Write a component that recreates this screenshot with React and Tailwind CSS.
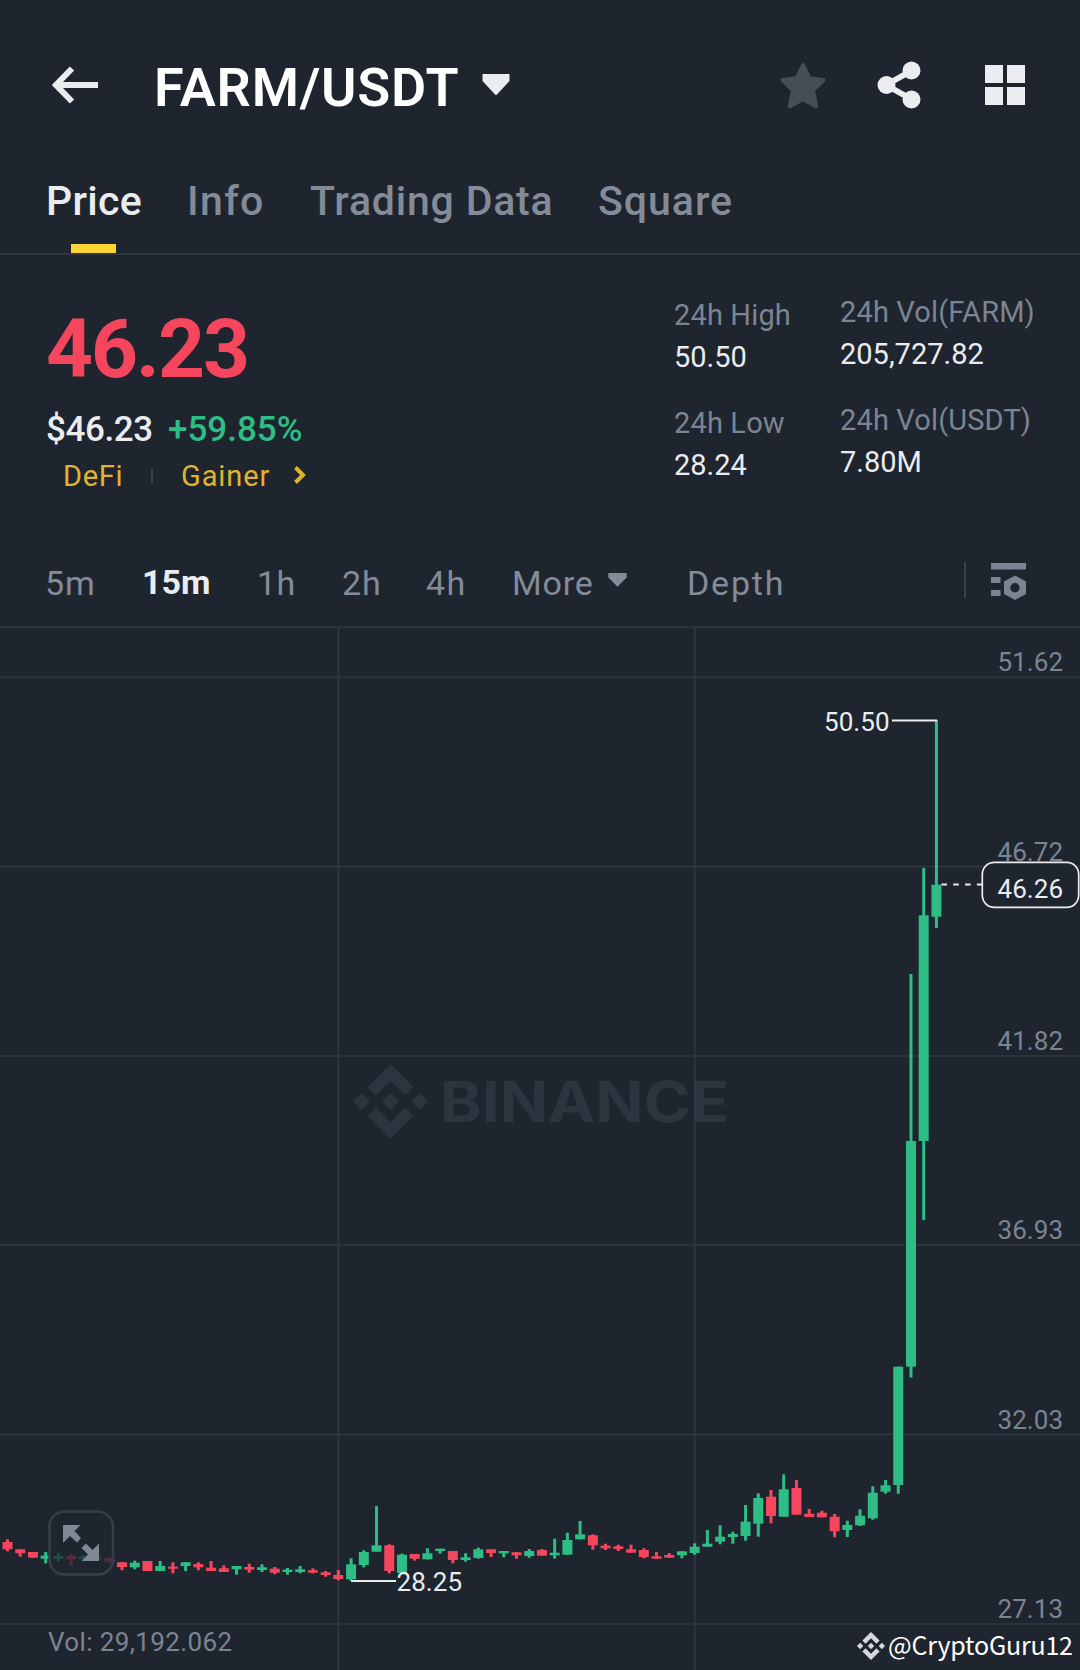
import { clsx } from 'clsx'

const UP = '#2ebd85'
const DOWN = '#f6465d'
const GRID = '#313843'

const TABS = [
  { label: 'Price', cls: 'ml-[46px] w-[141px] tracking-[0.3px]' },
  { label: 'Info', cls: 'w-[123px] tracking-[1.4px]' },
  { label: 'Trading Data', cls: 'w-[288px] tracking-[0.8px]' },
  { label: 'Square', cls: 'w-[150px] tracking-[1px]' },
]

const INTERVALS = [
  { label: '5m', cls: 'w-[97px] tracking-[1px]' },
  { label: '15m', cls: 'w-[115px]' },
  { label: '1h', cls: 'w-[85px] tracking-[0.5px]' },
  { label: '2h', cls: 'w-[84px] tracking-[0.8px]' },
  { label: '4h', cls: 'w-[86px] tracking-[1.5px]' },
]

const STATS = [
  [['24h High', '50.50'], ['24h Low', '28.24']],
  [['24h Vol(FARM)', '205,727.82'], ['24h Vol(USDT)', '7.80M']],
]

const LEVELS = [
  { y: 677.3, label: '51.62' },
  { y: 866.5, label: '46.72' },
  { y: 1056, label: '41.82' },
  { y: 1245, label: '36.93' },
  { y: 1434.5, label: '32.03' },
  { y: 1624, label: '27.13' },
]

// up?, high, body top, body bottom, low
const CANDLES = [
  [0, 1539.3, 1542, 1549.3, 1551.3],
  [0, 1549.3, 1549.3, 1553.3, 1556.7],
  [0, 1552, 1552, 1557.7, 1557.7],
  [1, 1552, 1555.7, 1558.7, 1563.3],
  [1, 1553.3, 1556, 1558.7, 1561.7],
  [0, 1554.3, 1556, 1559.3, 1566],
  [1, 1555.3, 1556.7, 1559.3, 1560],
  [1, 1556.7, 1557.3, 1559.3, 1560.7],
  [0, 1557.3, 1558.3, 1561.7, 1562.7],
  [0, 1562.3, 1562.3, 1567, 1570.3],
  [1, 1560.7, 1562.7, 1567.3, 1569.3],
  [0, 1561, 1561, 1571, 1571],
  [1, 1561, 1566, 1571, 1571],
  [0, 1562.3, 1566.7, 1568.7, 1573.3],
  [1, 1562.3, 1562.3, 1566, 1571],
  [0, 1562.3, 1564, 1567.3, 1570.3],
  [0, 1561, 1567.7, 1571, 1571],
  [0, 1565.3, 1568.3, 1572, 1572],
  [1, 1566, 1566, 1569.3, 1574.7],
  [0, 1563.7, 1567, 1569.7, 1572.7],
  [1, 1564.3, 1567.3, 1570, 1572],
  [0, 1567, 1568.7, 1572.7, 1574.3],
  [1, 1568, 1569.7, 1572, 1574.7],
  [1, 1566, 1569.3, 1572, 1573.3],
  [0, 1568.3, 1570.3, 1572.7, 1573.3],
  [0, 1571, 1572.3, 1575, 1576.7],
  [0, 1570, 1575, 1579, 1580.3],
  [1, 1558.3, 1564.3, 1579.3, 1581],
  [1, 1550.3, 1552, 1565, 1567.3],
  [1, 1506, 1545.3, 1551.7, 1551.7],
  [0, 1544.3, 1545.3, 1571, 1573.3],
  [1, 1553.7, 1554.7, 1573, 1573],
  [0, 1554, 1554, 1558.7, 1560.7],
  [1, 1548.3, 1553.3, 1559.3, 1559.3],
  [1, 1548.7, 1548.7, 1551, 1553.7],
  [0, 1551, 1551, 1560, 1563.3],
  [1, 1553.3, 1557.3, 1560, 1561.7],
  [1, 1547.7, 1549.3, 1558, 1558.7],
  [0, 1549.3, 1549.3, 1553, 1557],
  [1, 1551, 1551, 1553.3, 1557.3],
  [0, 1552.3, 1552.3, 1555.3, 1558.7],
  [1, 1549, 1551, 1556, 1557.7],
  [0, 1549, 1550, 1555.7, 1555.7],
  [1, 1538.7, 1552.7, 1555.3, 1558.7],
  [1, 1532.7, 1540, 1554.7, 1554.7],
  [1, 1521, 1534.3, 1539.3, 1539.3],
  [0, 1534.3, 1535.3, 1545.3, 1549.7],
  [0, 1543.7, 1545.7, 1548.3, 1550],
  [0, 1544.7, 1546.3, 1549, 1551],
  [0, 1544.7, 1549.3, 1552.7, 1552.7],
  [0, 1548.3, 1550, 1557, 1558.3],
  [0, 1552, 1556.3, 1558.7, 1558.7],
  [0, 1553, 1555, 1557.7, 1557.7],
  [1, 1551.3, 1551.3, 1555.3, 1558.3],
  [1, 1543.3, 1546.7, 1553, 1554.7],
  [1, 1530, 1543.7, 1546.7, 1546.7],
  [1, 1525.3, 1536.7, 1541.7, 1544.3],
  [1, 1531.7, 1534, 1537, 1543.7],
  [1, 1505, 1521.7, 1536, 1540.7],
  [1, 1493.3, 1498, 1523.7, 1536.7],
  [0, 1490, 1496.7, 1516, 1523.3],
  [1, 1474.3, 1489.3, 1516.7, 1516.7],
  [0, 1480, 1488, 1514.7, 1514.7],
  [0, 1509, 1513.7, 1517, 1517],
  [0, 1510.7, 1512.7, 1517.3, 1517.3],
  [0, 1514, 1516.7, 1531.3, 1537.3],
  [1, 1520.7, 1525, 1530, 1537],
  [1, 1509.3, 1515.7, 1525.3, 1526],
  [1, 1486.3, 1492.7, 1518.3, 1519.7],
  [1, 1480, 1485.3, 1491.7, 1493.7],
  [1, 1366.7, 1366.7, 1485, 1493.7],
  [1, 974, 1141, 1366.7, 1377.5],
  [1, 868, 915.3, 1141, 1220],
  [1, 720, 884.7, 916.7, 928],
]

const X0 = 7.5
const STEP = 12.725

function CaretDown({ className }) {
  return (
    <svg viewBox="0 0 28 22" className={className} preserveAspectRatio="none">
      <path d="M0.5 0H27.5V7L14 21.5L0.5 7Z" fill="currentColor" />
    </svg>
  )
}

function BinanceMark(props) {
  return (
    <svg viewBox="0 0 126.6 126.6" fill="currentColor" {...props}>
      <path d="M38.7 53.2L63.3 28.6L87.9 53.2L102.2 38.9L63.3 0L24.4 38.9Z" />
      <path d="M0 63.3L14.3 49L28.6 63.3L14.3 77.6Z" />
      <path d="M38.7 73.4L63.3 98L87.9 73.4L102.2 87.7L63.3 126.6L24.4 87.7Z" />
      <path d="M98 63.3L112.3 49L126.6 63.3L112.3 77.6Z" />
      <path d="M77.8 63.3L63.3 48.8L48.8 63.3L63.3 77.8Z" />
    </svg>
  )
}

function Header() {
  return (
    <header className="flex h-[170px] items-center text-[#eaecef]">
      <svg viewBox="0 0 46 38" className="ml-[52px] h-[38px] w-[46px]" fill="none" stroke="currentColor" strokeWidth="6">
        <path d="M20 2.5L4 19L20 35.5M4 19H46" />
      </svg>
      <h1 className="mt-[5px] ml-[56px] w-[328px] text-[54px] leading-[60px] font-semibold tracking-[0.8px] whitespace-nowrap text-white">
        FARM/USDT
      </h1>
      <CaretDown className="h-[22px] w-[28px]" />
      <svg viewBox="0 0 46 48" className="mt-[1px] ml-[270px] h-[48px] w-[46px] text-[#474d57]" fill="currentColor" stroke="currentColor" strokeWidth="4" strokeLinejoin="round">
        <path d="M23 3L29.3 16.2L43.5 18L33 28.3L36.3 44.5L23 37L9.7 44.5L13 28.3L2.5 18L16.7 16.2Z" />
      </svg>
      <svg viewBox="0 0 44 48" className="ml-[51px] h-[48px] w-[44px]" fill="currentColor" stroke="currentColor">
        <path d="M9 24L34 10M9 24L34 38" strokeWidth="6" />
        <g stroke="none">
          <circle cx="9.5" cy="24" r="9" />
          <circle cx="34.5" cy="9.5" r="9" />
          <circle cx="34.5" cy="38.5" r="9" />
        </g>
      </svg>
      <div className="ml-[64px] grid grid-cols-2 gap-[4px]">
        {[0, 1, 2, 3].map(i => (
          <div key={i} className="h-[18px] w-[18px] bg-current" />
        ))}
      </div>
    </header>
  )
}

function Tabs() {
  return (
    <nav className="flex h-[85px] border-b-2 border-[#2f3640]">
      {TABS.map((t, i) => (
        <div key={t.label} className={clsx('h-[83px] shrink-0', t.cls)}>
          <p className={clsx('pt-px text-[41px] leading-[60px] font-medium whitespace-nowrap', i === 0 ? 'text-[#eaecef]' : 'text-[#848b98]')}>
            {t.label}
          </p>
          {i === 0 && <div className="mt-[13px] ml-[25px] h-[9px] w-[45px] bg-[#fcd535]" />}
        </div>
      ))}
    </nav>
  )
}

function Summary() {
  return (
    <section className="flex h-[285px]">
      <div className="w-[674px] pt-[44px] pl-[46px]">
        <p className="text-[82px] leading-[100px] font-bold tracking-[-2px] text-[#f6465d]">46.23</p>
        <div className="mt-[11px] flex text-[35px] leading-[40px] font-medium">
          <p className="w-[122px] tracking-[-0.4px] text-[#eaecef]">$46.23</p>
          <p className="text-[#2ebd85]">+59.85%</p>
        </div>
        <div className="mt-[6px] flex items-center text-[29px] leading-[40px] text-[#e0b42c]">
          <p className="ml-[17px] w-[88px] tracking-[0.7px]">DeFi</p>
          <div className="h-[14px] w-[2px] bg-[#3a414c]" />
          <p className="ml-[28px] w-[113px] tracking-[0.9px]">Gainer</p>
          <svg viewBox="0 0 12 18" className="mb-[2px] h-[18px] w-[12px]" fill="none" stroke="currentColor" strokeWidth="4">
            <path d="M1.5 1.5L9 9L1.5 16.5" />
          </svg>
        </div>
      </div>
      {STATS.map((col, i) => (
        <div key={i} className={clsx('flex flex-col gap-6 text-[29px] leading-[42px] whitespace-nowrap', i === 0 ? 'w-[166px] pt-[39px]' : 'pt-[36px]')}>
          {col.map(([name, value]) => (
            <div key={name}>
              <p className="tracking-[0.15px] text-[#7c8491]">{name}</p>
              <p className="text-[#eaecef]">{value}</p>
            </div>
          ))}
        </div>
      ))}
    </section>
  )
}

function Intervals() {
  return (
    <div className="flex h-[88px] items-center border-b-2 border-[#2b323d] pl-[45px] text-[34px] text-[#848b98]">
      {INTERVALS.map(t => (
        <p key={t.label} className={clsx('shrink-0', t.cls, t.label === '15m' && 'mb-[2px] font-bold text-[#eaecef]')}>
          {t.label}
        </p>
      ))}
      <p className="w-[96px] tracking-[0.8px]">More</p>
      <CaretDown className="mb-[7px] h-[14px] w-[19px]" />
      <p className="ml-[60px] w-[277px] tracking-[1.8px]">Depth</p>
      <div className="mb-[7px] h-[36px] w-[2px] bg-[#3a414c]" />
      <svg viewBox="0 0 35 37" className="mb-[4px] ml-[25px] h-[37px] w-[35px] text-[#7c8491]" fill="currentColor">
        <path d="M0 0H35V6.5H0ZM0 14H9.5V20H0ZM0 27H9.5V33H0Z" />
        <path fillRule="evenodd" d="M24 12.5L35 18.5V31L24 37L13 31V18.5ZM24 20A4.7 4.7 0 1 0 24 29.4A4.7 4.7 0 1 0 24 20Z" />
      </svg>
    </div>
  )
}

function Chart() {
  return (
    <svg viewBox="0 628 1080 1042" className="block h-[1042px] w-[1080px]" fontSize="26">
      {/* watermark */}
      <g className="text-[#2e343f]" fill="currentColor">
        <BinanceMark x="353" y="1064" width="75" height="75" />
        <text x="440" y="1122" fontSize="56" fontWeight="700" textLength="289" lengthAdjust="spacingAndGlyphs" className="font-['Inter',sans-serif]">BINANCE</text>
      </g>

      {/* grid and price scale */}
      <g stroke={GRID} strokeWidth="1.6">
        {LEVELS.map(l => <path key={l.y} d={`M0 ${l.y}H1080`} />)}
        <path d="M338.5 628V1670M694.7 628V1670" />
      </g>
      {LEVELS.map(l => (
        <text key={l.label} x="997.5" y={l.y - 6} fill="#7c8491" textLength="65.5">{l.label}</text>
      ))}

      {CANDLES.map(([up, high, top, bottom, low], i) => {
        const x = X0 + i * STEP
        return (
          <g key={i} fill={up ? UP : DOWN}>
            <rect x={x - 1.5} y={high} width="3" height={low - high} />
            <rect x={x - 5} y={top} width="10" height={bottom - top} />
          </g>
        )
      })}

      {/* high / low markers */}
      <g fill="#eaecef">
        <path d="M892 720.5H937M351 1581H396" stroke="#eaecef" strokeWidth="1.8" />
        <text x="824" y="731" textLength="65.5">50.50</text>
        <text x="396.5" y="1590.5" textLength="65.5">28.25</text>
      </g>

      {/* last price */}
      <path d="M941.5 884.5H982" stroke="#eaecef" strokeWidth="1.8" strokeDasharray="5.5 6.3" />
      <rect x="982.3" y="862.3" width="96.4" height="45" rx="12" fill="#1e252f" stroke="#eaecef" strokeWidth="1.7" />
      <text x="997.5" y="898" fill="#eaecef" textLength="65.5">46.26</text>

      {/* fullscreen button */}
      <rect x="49.5" y="1511.5" width="63.5" height="63" rx="15" fill="#1e252f" fillOpacity="0.75" stroke="#373e49" strokeWidth="2.5" />
      <g fill="#7f8794">
        <path d="M63 1525H80.5L74.5 1531L81 1538L77 1542.5L70 1536L63 1543Z" />
        <path d="M99 1561H81.5L88 1554.5L81.5 1548L86 1543.5L92.5 1550L99 1543.5Z" />
      </g>

      <text x="48" y="1650.5" fill="#7c8491" textLength="184">Vol: 29,192.062</text>
      <BinanceMark x="857" y="1632" width="28" height="28" className="text-[#d5d8de]" />
      <text x="888" y="1655" fill="#fff" fontSize="25" textLength="185" className="font-['Noto_Sans_CJK_SC',sans-serif]">@CryptoGuru12</text>
    </svg>
  )
}

export default function App() {
  return (
    <div className="h-[1670px] w-[1080px] overflow-hidden bg-[#1e252f] font-['Roboto',sans-serif]">
      <Header />
      <Tabs />
      <Summary />
      <Intervals />
      <Chart />
    </div>
  )
}
